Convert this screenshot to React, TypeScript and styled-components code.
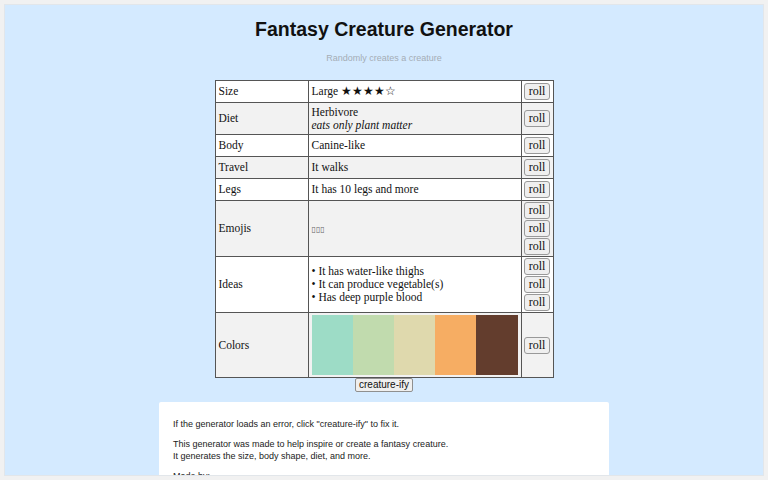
import React from "react";
import styled, { createGlobalStyle } from "styled-components";

const Global = createGlobalStyle`
  html, body { margin: 0; padding: 0; background: #f1f1f1; }
  body { width: 768px; height: 480px; overflow: hidden; }
`;

const Frame = styled.div`
  box-sizing: border-box;
  margin: 4px;
  height: 472px;
  background: #d4eaff;
  border: 1px solid #e2e6ea;
  overflow: hidden;
  display: flex;
  flex-direction: column;
  align-items: center;
  font-family: "Liberation Sans", Arial, sans-serif;
`;

const Title = styled.h1`
  margin: 12px 0 0;
  font-size: 19.5px;
  font-weight: bold;
  color: #111;
  line-height: 24px;
`;

const Subtitle = styled.p`
  margin: 11px 0 0;
  font-size: 9px;
  color: #a4adb6;
  line-height: 12px;
`;

const Table = styled.table`
  margin-top: 16px;
  border-collapse: collapse;
  width: 339px;
  font-family: "Liberation Serif", "Times New Roman", serif;
  font-size: 11.5px;
  color: #111;
`;

const Row = styled.tr<{ $alt?: boolean; $h?: number }>`
  background: ${(p) => (p.$alt ? "#f2f2f2" : "#ffffff")};
  ${(p) => (p.$h ? `height: ${p.$h}px;` : "")}
`;

const Cell = styled.td<{ $w?: number }>`
  border: 1px solid #555;
  padding: 1px 3px;
  vertical-align: middle;
  line-height: 13px;
  ${(p) => (p.$w ? `width: ${p.$w}px;` : "")}
`;

const BtnCell = styled.td`
  border: 1px solid #555;
  padding: 1px 2px;
  width: 27px;
  vertical-align: middle;
`;

const BtnStack = styled.div`
  display: flex;
  flex-direction: column;
  align-items: center;
  gap: 1px;
`;

const Roll = styled.button`
  box-sizing: border-box;
  height: 17px;
  font-family: "Liberation Serif", "Times New Roman", serif;
  font-size: 12px;
  line-height: 13px;
  padding: 1px 4px;
  margin: 0;
  background: #efefef;
  border: 1px solid #999;
  border-radius: 3px;
  color: #111;
`;

const Tofu = styled.span`
  font-family: "DejaVu Sans", sans-serif;
  font-size: 8px;
  color: #666;
`;

const Swatches = styled.div`
  display: flex;
  height: 60px;
  margin: 1px 0;
`;

const Swatch = styled.div<{ $c: string }>`
  flex: 1;
  background: ${(p) => p.$c};
`;

const CreateBtn = styled.button`
  margin-top: 0;
  font-family: "Liberation Sans", Arial, sans-serif;
  font-size: 10px;
  line-height: 12px;
  padding: 0px 3px;
  background: #efefef;
  border: 1px solid #8f8f8f;
  border-radius: 2px;
  color: #111;
`;

const Card = styled.div`
  box-sizing: border-box;
  margin-top: 10px;
  width: 450px;
  flex: 1;
  background: #fff;
  border-radius: 2px;
  padding: 16px 14px;
  font-size: 9px;
  line-height: 12px;
  color: #222;
`;

const Para = styled.p`
  margin: 0 0 8px;
`;

const colors = ["#9ddcc6", "#c1dbae", "#dfd9ad", "#f6ad63", "#633d2d"];

const Single = () => (
  <BtnCell>
    <BtnStack>
      <Roll>roll</Roll>
    </BtnStack>
  </BtnCell>
);

const Triple = () => (
  <BtnCell>
    <BtnStack>
      <Roll>roll</Roll>
      <Roll>roll</Roll>
      <Roll>roll</Roll>
    </BtnStack>
  </BtnCell>
);

export default function App() {
  return (
    <>
      <Global />
      <Frame>
        <Title>Fantasy Creature Generator</Title>
        <Subtitle>Randomly creates a creature</Subtitle>
        <Table>
          <tbody>
            <Row $h={22}>
              <Cell $w={86}>Size</Cell>
              <Cell>Large ★★★★☆</Cell>
              <Single />
            </Row>
            <Row $alt $h={32}>
              <Cell>Diet</Cell>
              <Cell>Herbivore<br /><i>eats only plant matter</i></Cell>
              <Single />
            </Row>
            <Row $h={22}>
              <Cell>Body</Cell>
              <Cell>Canine-like</Cell>
              <Single />
            </Row>
            <Row $alt $h={22}>
              <Cell>Travel</Cell>
              <Cell>It walks</Cell>
              <Single />
            </Row>
            <Row $h={22}>
              <Cell>Legs</Cell>
              <Cell>It has 10 legs and more</Cell>
              <Single />
            </Row>
            <Row $alt>
              <Cell>Emojis</Cell>
              <Cell><Tofu>▯▯▯</Tofu></Cell>
              <Triple />
            </Row>
            <Row>
              <Cell>Ideas</Cell>
              <Cell>
                • It has water-like thighs<br />
                • It can produce vegetable(s)<br />
                • Has deep purple blood
              </Cell>
              <Triple />
            </Row>
            <Row $alt>
              <Cell>Colors</Cell>
              <Cell>
                <Swatches>
                  {colors.map((c) => (
                    <Swatch key={c} $c={c} />
                  ))}
                </Swatches>
              </Cell>
              <Single />
            </Row>
          </tbody>
        </Table>
        <CreateBtn>creature-ify</CreateBtn>
        <Card>
          <Para>If the generator loads an error, click "creature-ify" to fix it.</Para>
          <Para>
            This generator was made to help inspire or create a fantasy creature.<br />
            It generates the size, body shape, diet, and more.
          </Para>
          <Para>Made by:</Para>
        </Card>
      </Frame>
    </>
  );
}
